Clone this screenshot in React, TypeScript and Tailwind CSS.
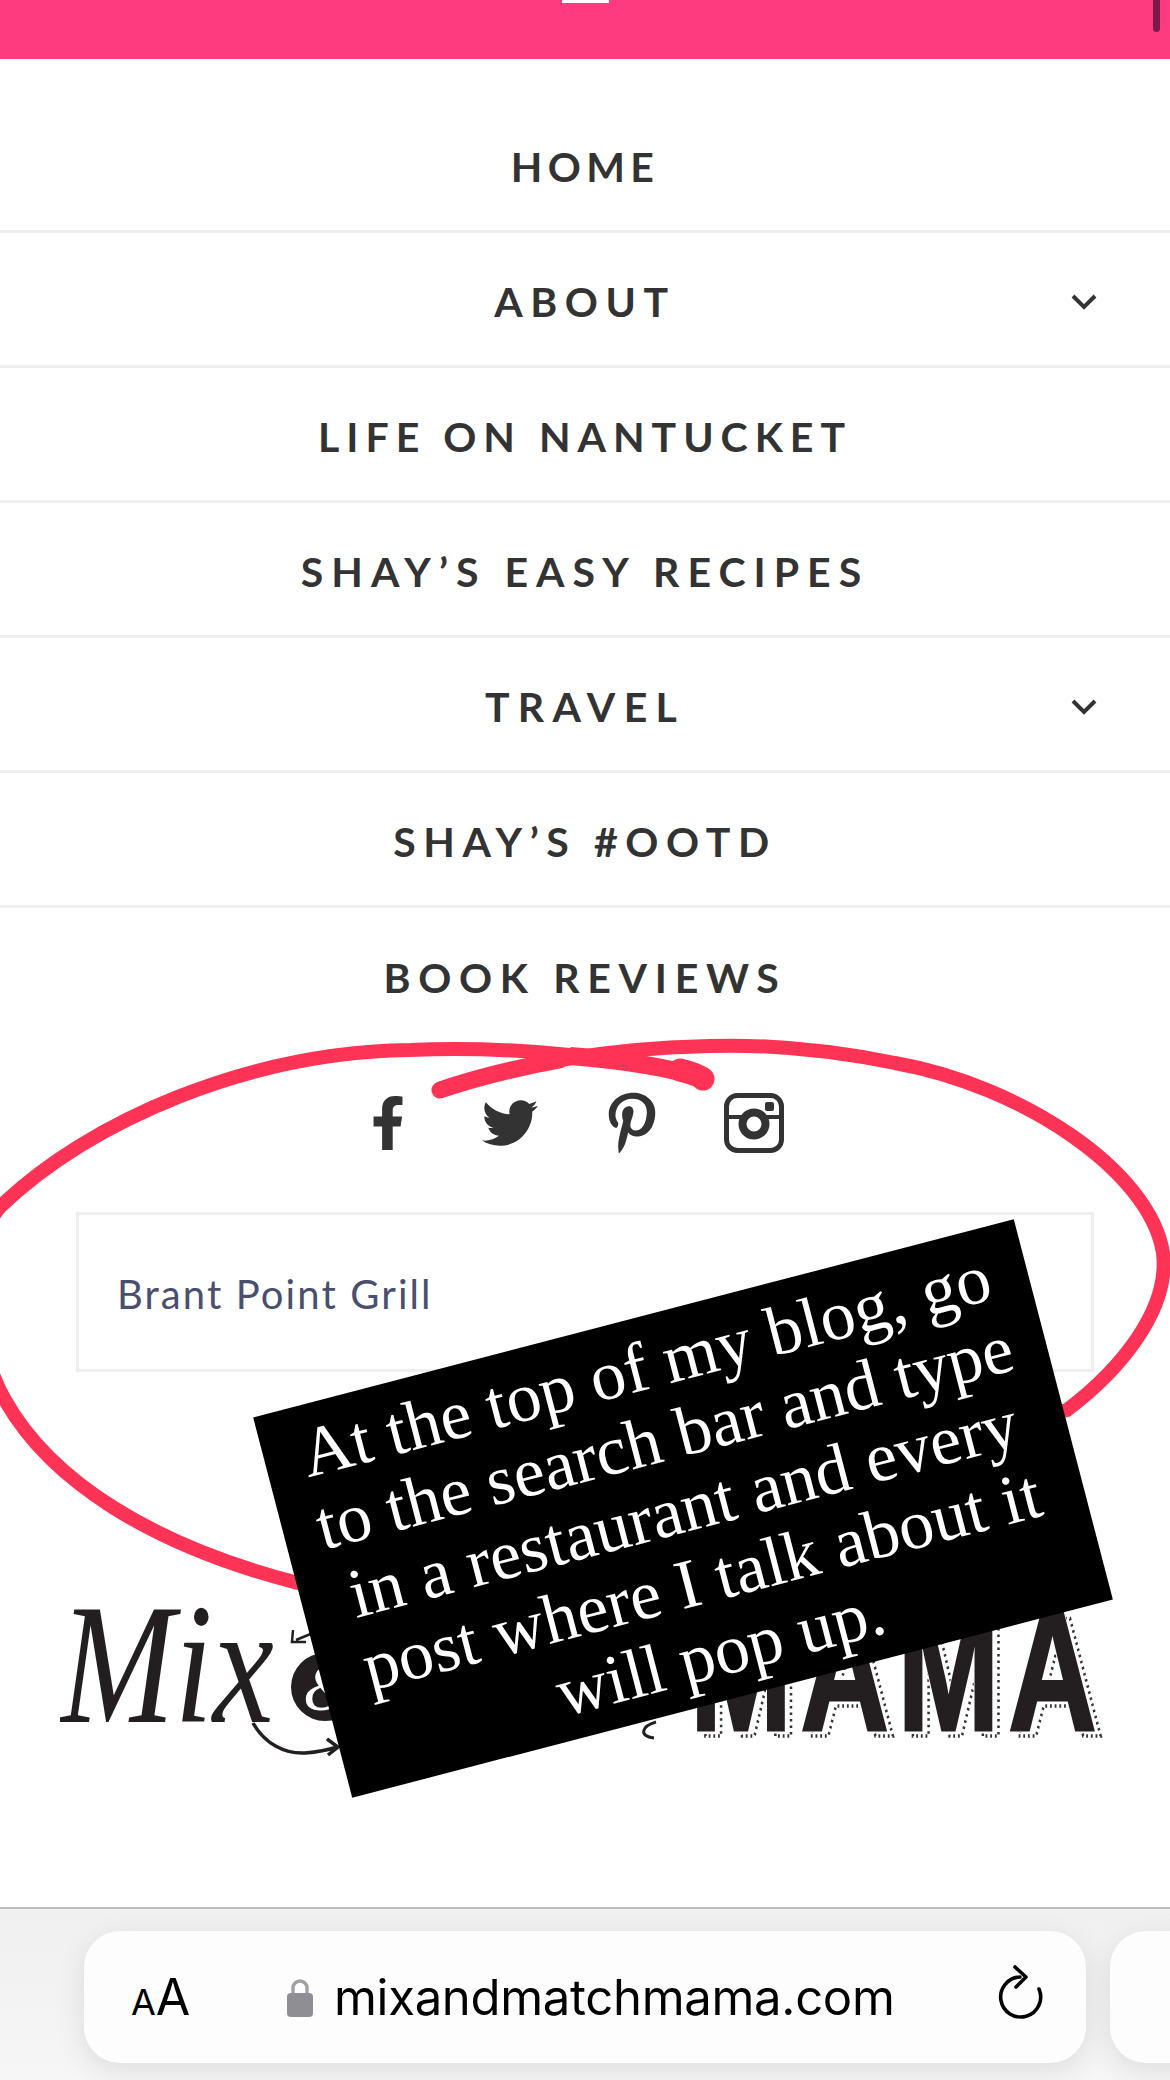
import { FaFacebookF, FaTwitter, FaPinterestP } from "react-icons/fa";

const items = [
  { label: "HOME", more: false, track: "tracking-[5.4px]" },
  { label: "ABOUT", more: true, track: "tracking-[7.6px]" },
  { label: "LIFE ON NANTUCKET", more: false, track: "tracking-[7px]" },
  { label: "SHAY’S EASY RECIPES", more: false, track: "tracking-[8px]" },
  { label: "TRAVEL", more: true, track: "tracking-[8.3px]" },
  { label: "SHAY’S #OOTD", more: false, track: "tracking-[7.6px]" },
  { label: "BOOK REVIEWS", more: false, track: "tracking-[7.7px]" },
];

function Chevron() {
  return (
    <svg className="absolute right-[72px] top-1/2 -mt-[7px]" width="28" height="20" viewBox="0 0 28 20" fill="none">
      <path d="M3 4 L14 15 L25 4" stroke="#333" strokeWidth="4" />
    </svg>
  );
}

function Instagram() {
  return (
    <svg width="60" height="60" viewBox="0 0 60 60" fill="none">
      <rect x="2.5" y="2.5" width="55" height="55" rx="11" stroke="#333" strokeWidth="5" />
      <path d="M3 24 H18 M42 24 H57" stroke="#333" strokeWidth="4" />
      <circle cx="30" cy="31" r="11.5" stroke="#333" strokeWidth="8" />
      <rect x="41" y="9" width="9" height="9" rx="2" fill="#333" />
    </svg>
  );
}

function Reload() {
  return (
    <svg width="46" height="56" viewBox="0 0 46 56" fill="none" stroke="#000" strokeWidth="3.6" strokeLinecap="round" strokeLinejoin="round">
      <path d="M22 12 A20 20 0 1 0 41 24" />
      <path d="M17 2 L28 12 L18 22" />
    </svg>
  );
}

function Lock() {
  return (
    <svg width="28" height="40" viewBox="0 0 28 40">
      <path d="M7 20 V11 a7 7 0 0 1 14 0 V20" fill="none" stroke="#a2a2a6" strokeWidth="3.5" />
      <rect x="1" y="16" width="26" height="24" rx="4" fill="#8e8e93" />
    </svg>
  );
}

function Logo() {
  return (
    <svg width="1060" height="170" viewBox="0 0 1060 170" className="block">
      <text x="0" y="126" fontFamily="'Liberation Serif', serif" fontStyle="italic" fontSize="172" fill="#231f20" transform="scale(0.8 1)">Mix</text>
      <circle cx="265" cy="91" r="34" fill="#231f20" />
      <text x="243" y="114" fontFamily="'Liberation Serif', serif" fontStyle="italic" fontSize="66" fill="#ffffff">&amp;</text>
      <path d="M193 127 C205 148 225 158 245 157 C258 156 268 154 277 151 M267 143 L278 151 L268 159" fill="none" stroke="#231f20" strokeWidth="3.5" />
      <path d="M270 30 L236 44 M233 34 L232 46 L246 46" fill="none" stroke="#231f20" strokeWidth="2.5" />
      <path d="M596 126 C582 130 578 140 594 142" fill="none" stroke="#231f20" strokeWidth="3" />
      <g transform="translate(630 134) scale(0.72 1)">
        <text x="10" y="6" fontFamily="'Liberation Sans', sans-serif" fontWeight="700" fontSize="170" letterSpacing="12" fill="none" stroke="#333" strokeWidth="3.5" strokeDasharray="2.5 4">MAMA</text>
        <text x="0" y="0" fontFamily="'Liberation Sans', sans-serif" fontWeight="700" fontSize="170" letterSpacing="12" fill="#ffffff" stroke="#ffffff" strokeWidth="5">MAMA</text>
        <text x="0" y="0" fontFamily="'Liberation Sans', sans-serif" fontWeight="700" fontSize="170" letterSpacing="12" fill="#231f20" stroke="#231f20" strokeWidth="3">MAMA</text>
      </g>
    </svg>
  );
}

export default function App() {
  return (
    <div className="relative w-[1170px] h-[2080px] overflow-hidden bg-white font-['Lato','Liberation_Sans',sans-serif]">
      <header className="relative h-[59px] bg-[#ff3b7f]">
        <div className="mx-auto w-[47px] h-[3px] bg-white" />
        <div className="absolute right-[10px] top-0 w-[7px] h-[32px] rounded-b-full bg-[#7a1a4a]" />
      </header>

      <nav className="mt-[39px]">
        {items.map((item, i) => (
          <div
            key={item.label}
            className={`relative flex h-[135px] items-center justify-center text-[41px] leading-none font-bold text-[#333] ${item.track} ${i < items.length - 1 ? "border-b-[3px] border-[#eeeeee]" : ""}`}
          >
            <span className="relative top-[2px]">{item.label}</span>
            {item.more && <Chevron />}
          </div>
        ))}
      </nav>

      <div className="mt-[50px] flex h-[60px] items-center justify-center pr-[28px] text-[#333]">
        <div className="flex w-[122px] justify-center"><FaFacebookF size={54} /></div>
        <div className="flex w-[122px] justify-center"><FaTwitter size={56} /></div>
        <div className="flex w-[122px] justify-center"><FaPinterestP size={62} /></div>
        <div className="flex w-[122px] justify-center"><Instagram /></div>
      </div>

      <div className="mx-[76px] mt-[59px] flex h-[160px] w-[1018px] items-center border-[3px] border-[#eeeeee] pl-[38px] pt-[3px] text-[40px] tracking-[2.1px] text-[#4a4f6d]">
        Brant Point Grill
      </div>

      <div className="ml-[60px] mt-[224px]">
        <Logo />
      </div>

      <footer className="absolute bottom-0 left-0 h-[173px] w-full border-t-[2px] border-[#bdbdbd] bg-gradient-to-b from-[#f0f0f0] to-[#f6f6f6]">
        <div className="absolute left-[84px] top-[22px] flex h-[132px] w-[1002px] items-center rounded-[36px] bg-[#fdfdfd] shadow-[0_8px_30px_rgba(0,0,0,0.10)] font-['Inter',sans-serif] text-black">
          <span className="ml-[47px] flex w-[58px] items-baseline">
            <span className="text-[36px] leading-none">A</span>
            <span className="text-[50px] leading-none">A</span>
          </span>
          <span className="ml-[97px]"><Lock /></span>
          <span className="ml-[20px] text-[49px] leading-none tracking-[-0.3px]">mixandmatchmama.com</span>
          <span className="absolute right-[42px] top-[34px]"><Reload /></span>
        </div>
        <div className="absolute left-[1110px] top-[22px] h-[132px] w-[120px] rounded-[36px] bg-[#fdfdfd] shadow-[0_8px_30px_rgba(0,0,0,0.10)]" />
      </footer>

      <svg className="pointer-events-none absolute left-0 top-0" width="1170" height="2080" viewBox="0 0 1170 2080" fill="none">
        <path
          d="M702 1078 C620 1055 500 1046 410 1050 C250 1052 90 1120 0 1207 C-30 1240 -30 1340 5 1400 C50 1480 150 1545 298 1583 C500 1560 800 1480 1067 1410 C1120 1370 1170 1310 1163 1253 C1150 1170 1020 1085 895 1063 C835 1051 770 1044 709 1046 C655 1047 605 1052 560 1060 C515 1068 475 1078 440 1090"
          stroke="#ff3355"
          strokeWidth="14"
          strokeLinecap="round"
        />
        <path d="M570 1056 C620 1060 670 1068 702 1078" stroke="#ff3355" strokeWidth="18" />
        <path d="M680 1070 C692 1073 700 1076 703 1079" stroke="#ff3355" strokeWidth="23" strokeLinecap="round" />
        <path d="M560 1060 C515 1068 475 1078 440 1090" stroke="#ff3355" strokeWidth="17" strokeLinecap="round" />
      </svg>

      <div className="absolute left-[290px] top-[1312px] flex h-[393px] w-[786px] -rotate-[14.6deg] items-center justify-center bg-black text-center font-['Liberation_Serif',serif] text-[70px] leading-[74px] text-white">
        <p>
          At the top of my blog, go<br />
          to the search bar and type<br />
          in a restaurant and every<br />
          post where I talk about it<br />
          will pop up.
        </p>
      </div>
    </div>
  );
}
